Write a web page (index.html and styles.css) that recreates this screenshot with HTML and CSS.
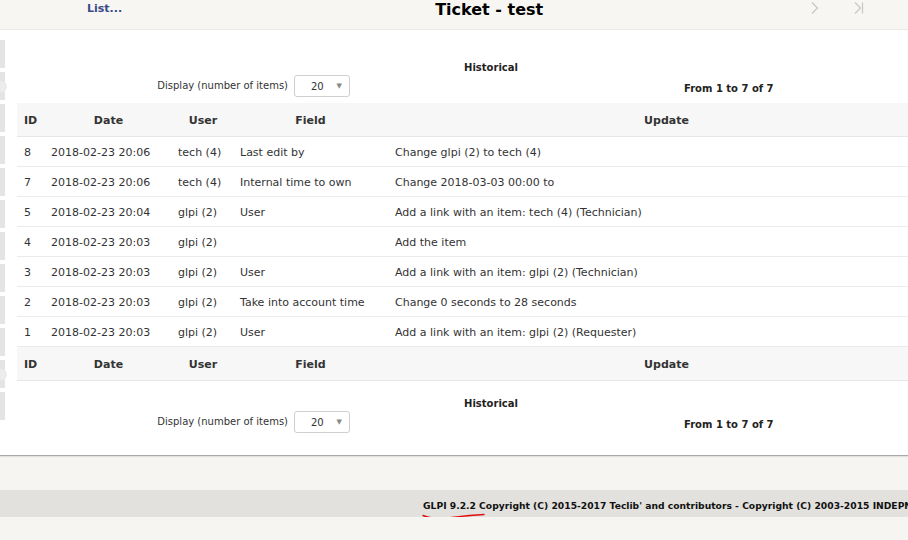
FILE: index.html
```html
<!DOCTYPE html>
<html>
<head>
<meta charset="utf-8">
<title>Ticket - test</title>
<link rel="stylesheet" href="styles.css">
</head>
<body>
<div class="topbar">
  <a class="list-link">List...</a>
  <h1 class="title">Ticket - test</h1>
  <div class="nav">
    <svg class="nav-icon" width="10" height="14" viewBox="0 0 10 14"><path d="M2 1.5 L7.5 7 L2 12.5" fill="none" stroke="#c9c9c9" stroke-width="1.3"/></svg>
    <svg class="nav-icon last" width="12" height="14" viewBox="0 0 12 14"><path d="M2 1.5 L7.5 7 L2 12.5" fill="none" stroke="#c9c9c9" stroke-width="1.3"/><path d="M9.5 1.5 L9.5 12.5" stroke="#c9c9c9" stroke-width="1.3"/></svg>
  </div>
</div>

<div class="main">
  <div class="tabs">
    <div class="tab"></div><div class="tab bump"></div><div class="tab"></div><div class="tab"></div>
    <div class="tab"></div><div class="tab"></div><div class="tab"></div><div class="tab"></div>
    <div class="tab"></div><div class="tab"></div><div class="tab bump"></div><div class="tab"></div>
  </div>
  <div class="content">
    <div class="hist-title">Historical</div>
    <div class="pager">
      <div class="pager-display">
        <span class="display-label">Display (number of items)</span>
        <span class="select"><span class="select-val">20</span><span class="select-arrow">▼</span></span>
      </div>
      <div class="pager-info">From 1 to 7 of 7</div>
    </div>

    <table class="hist">
      <colgroup>
        <col class="c-id"><col class="c-date"><col class="c-user"><col class="c-field"><col class="c-upd">
      </colgroup>
      <thead>
        <tr><th class="id">ID</th><th>Date</th><th>User</th><th>Field</th><th>Update</th></tr>
      </thead>
      <tbody>
        <tr><td>8</td><td>2018-02-23 20:06</td><td>tech (4)</td><td>Last edit by</td><td>Change glpi (2) to tech (4)</td></tr>
        <tr><td>7</td><td>2018-02-23 20:06</td><td>tech (4)</td><td>Internal time to own</td><td>Change 2018-03-03 00:00 to</td></tr>
        <tr><td>5</td><td>2018-02-23 20:04</td><td>glpi (2)</td><td>User</td><td>Add a link with an item: tech (4) (Technician)</td></tr>
        <tr><td>4</td><td>2018-02-23 20:03</td><td>glpi (2)</td><td></td><td>Add the item</td></tr>
        <tr><td>3</td><td>2018-02-23 20:03</td><td>glpi (2)</td><td>User</td><td>Add a link with an item: glpi (2) (Technician)</td></tr>
        <tr><td>2</td><td>2018-02-23 20:03</td><td>glpi (2)</td><td>Take into account time</td><td>Change 0 seconds to 28 seconds</td></tr>
        <tr><td>1</td><td>2018-02-23 20:03</td><td>glpi (2)</td><td>User</td><td>Add a link with an item: glpi (2) (Requester)</td></tr>
      </tbody>
      <tfoot>
        <tr><th class="id">ID</th><th>Date</th><th>User</th><th>Field</th><th>Update</th></tr>
      </tfoot>
    </table>

    <div class="hist-title second">Historical</div>
    <div class="pager">
      <div class="pager-display">
        <span class="display-label">Display (number of items)</span>
        <span class="select"><span class="select-val">20</span><span class="select-arrow">▼</span></span>
      </div>
      <div class="pager-info">From 1 to 7 of 7</div>
    </div>
  </div>
</div>

<div class="spacer"></div>
<div class="footer">
  <span class="footer-text">GLPI 9.2.2 Copyright (C) 2015-2017 Teclib' and contributors - Copyright (C) 2003-2015 INDEPNET Development Team</span>
  <svg class="scribble" width="64" height="8" viewBox="0 0 64 8"><path d="M1 2.5 C 8 5.5, 18 6, 30 4.5 C 42 3, 52 2, 62 1.5" fill="none" stroke="#e01010" stroke-width="1.4" stroke-linecap="round"/></svg>
</div>
</body>
</html>
```

FILE: styles.css
```css
html, body {
  margin: 0;
  padding: 0;
  width: 908px;
  height: 540px;
  overflow: hidden;
  background: #f6f5f1;
  font-family: "DejaVu Sans", Verdana, sans-serif;
  color: #333;
}

.topbar {
  height: 29px;
  border-bottom: 1px solid #ebe9e3;
  background: #f7f6f2;
  display: flex;
  align-items: flex-start;
}
.list-link {
  margin-left: 87px;
  margin-top: 2px;
  font-size: 11px;
  font-weight: bold;
  color: #39498a;
  line-height: 14px;
}
.title {
  margin: 1px 0 0 313px;
  font-size: 16px;
  font-weight: bold;
  color: #000;
  line-height: 18px;
}
.nav {
  display: flex;
  margin-left: auto;
  margin-right: 43px;
  margin-top: 1px;
  gap: 33px;
}
.nav-icon { display: block; }

.main {
  height: 425px;
  background: #fff;
  border-bottom: 1px solid #a8a8a8;
  box-shadow: 0 1px 1px rgba(0,0,0,0.08);
  display: flex;
}
.tabs {
  width: 5px;
  padding-top: 10px;
  margin-right: 12px;
  display: flex;
  flex-direction: column;
  gap: 4px;
  flex: none;
}
.tab {
  height: 28px;
  background: #e4e4e4;
  position: relative;
}
.tab.bump::after {
  content: "";
  position: absolute;
  left: 0;
  top: 9px;
  width: 7px;
  height: 11px;
  border-radius: 0 6px 6px 0;
  background: #ececec;
}

.content {
  width: 928px;
  flex: none;
}
.hist-title {
  margin-top: 31px;
  padding-left: 20px;
  text-align: center;
  font-size: 10px;
  font-weight: bold;
  line-height: 14px;
  color: #222;
}
.hist-title.second { margin-top: 16px; }

.pager {
  margin-top: 0;
  height: 22px;
  display: flex;
  align-items: center;
}
.pager-display {
  width: 333px;
  display: flex;
  justify-content: flex-end;
  align-items: center;
  gap: 6px;
  flex: none;
}
.display-label {
  font-size: 10px;
  color: #333;
  margin-top: -1px;
}
.select {
  width: 54px;
  height: 20px;
  border: 1px solid #cfcfcf;
  border-radius: 3px;
  background: #fff;
  display: flex;
  align-items: center;
  box-sizing: content-box;
}
.select-val {
  margin-left: 16px;
  font-size: 10px;
  color: #333;
  padding-top: 1px;
}
.select-arrow {
  margin-left: auto;
  margin-right: 7px;
  font-size: 7px;
  color: #888;
}
.pager-info {
  margin-left: 334px;
  padding-top: 5px;
  font-size: 10px;
  font-weight: bold;
  color: #222;
}

.hist {
  margin-top: 6px;
  width: 928px;
  border-collapse: collapse;
  table-layout: fixed;
  font-size: 11px;
}
.c-id { width: 27px; }
.c-date { width: 129px; }
.c-user { width: 60px; }
.c-field { width: 155px; }
.c-upd { width: 557px; }

.hist th {
  height: 31px;
  padding: 2px 0 0 0;
  background: #f7f7f7;
  font-weight: bold;
  color: #333;
  text-align: center;
  border-bottom: 1px solid #e6e6e6;
  white-space: nowrap;
}
.hist th.id {
  text-align: left;
  padding-left: 7px;
}
.hist td {
  height: 27px;
  padding: 2px 0 0 7px;
  border-bottom: 1px solid #ebebeb;
  white-space: nowrap;
  color: #333;
}
.hist td:nth-child(3) { padding-left: 5px; }

.spacer { height: 34px; }
.footer {
  height: 27px;
  background: #e2e1dd;
  position: relative;
  display: flex;
  align-items: center;
  padding-left: 423px;
  white-space: nowrap;
  overflow: hidden;
}
.footer-text {
  font-size: 9.2px;
  font-weight: bold;
  color: #111;
  padding-top: 4px;
}
.scribble {
  position: absolute;
  left: 422px;
  top: 23px;
}
```
